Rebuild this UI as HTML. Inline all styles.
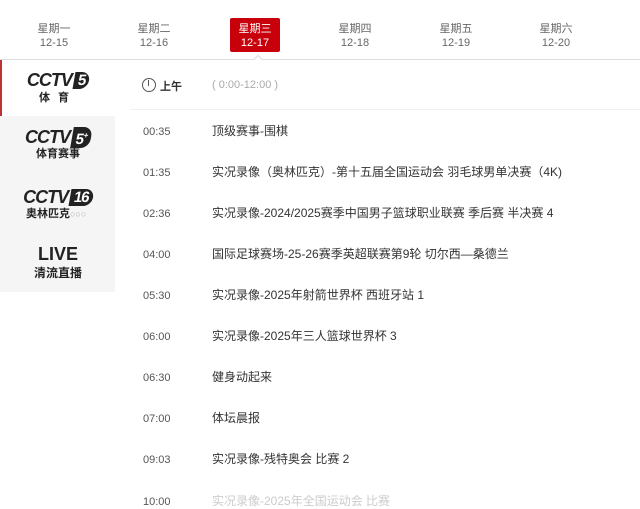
<!DOCTYPE html>
<html><head><meta charset="utf-8"><style>
*{margin:0;padding:0;box-sizing:border-box}
body{width:640px;height:491px;overflow:hidden;background:#fff;font-family:"Liberation Sans","Noto Sans CJK SC",sans-serif;color:#333;position:relative}
.day{position:absolute;top:22px;width:60px;text-align:center;font-size:11px;line-height:14px;color:#666}
.act{background:#c8000b;color:#fff;border-radius:2px;top:18px;height:34px;padding-top:4px;width:50px}
.hline{position:absolute;left:0;top:59px;width:640px;height:1px;background:#ddd}
.side{position:absolute;left:0;top:116px;width:115px;height:176px;background:#f5f5f5}
.logo{position:absolute;left:22px;width:72px;text-align:center}
.cctv{font:italic bold 18px "Liberation Sans",sans-serif;color:#222;letter-spacing:-1px;display:inline-flex;align-items:center;gap:2px}
.badge{background:#222;color:#fff;border-radius:0 9px 9px 0;padding:0 4px;font-size:15px;font-style:normal;line-height:17px;transform:skewX(-10deg)}
.sub{font-size:11px;font-weight:bold;color:#222;line-height:13px}
.row{position:absolute;left:143px;font-size:12px;line-height:14px}
.row .t{display:inline-block;width:69px;color:#555;font-size:11px}
</style></head><body>
<div class="day" style="left:24px">星期一<br>12-15</div>
<div class="day" style="left:124px">星期二<br>12-16</div>
<div class="day act" style="left:230px">星期三<br>12-17</div>
<div class="day" style="left:325px">星期四<br>12-18</div>
<div class="day" style="left:426px">星期五<br>12-19</div>
<div class="day" style="left:526px">星期六<br>12-20</div>
<div class="hline"></div>
<div style="position:absolute;left:255px;top:56px;width:6px;height:6px;background:#fff;border-left:1px solid #ddd;border-top:1px solid #ddd;transform:rotate(45deg)"></div>
<div style="position:absolute;left:0;top:60px;width:2px;height:56px;background:#b33"></div>
<div class="side"></div>
<div class="logo" style="top:70px"><span class="cctv">CCTV<span class="badge">5</span></span><div class="sub" style="letter-spacing:8px;margin-top:1px">体育</div></div>
<div class="logo" style="top:127px"><span class="cctv">CCTV<span class="badge">5<sup style="font-size:8px">+</sup></span></span><div class="sub">体育赛事</div></div>
<div class="logo" style="top:187px"><span class="cctv">CCTV<span class="badge">16</span></span><div class="sub" style="text-align:left;padding-left:4px">奥林匹克<span style="color:#aaa;font-weight:normal;font-size:9px">○○○</span></div></div>
<div class="logo" style="top:244px"><div style="font:bold 18px 'Liberation Sans',sans-serif;color:#222">LIVE</div><div class="sub" style="font-size:12px;margin-top:2px">清流直播</div></div>
<div style="position:absolute;left:142px;top:78px;width:14px;height:14px;border:1px solid #555;border-radius:50%"></div>
<div style="position:absolute;left:148px;top:80px;width:1px;height:6px;background:#555"></div>
<div style="position:absolute;left:160px;top:78px;font-size:11px;font-weight:bold;color:#333">上午</div>
<div style="position:absolute;left:212px;top:79px;font-size:11px;color:#aaa">( 0:00-12:00 )</div>
<div style="position:absolute;left:130px;top:109px;width:510px;height:1px;background:#f0f0f0"></div>
<div class="row" style="top:124px"><span class="t">00:35</span>顶级赛事-围棋</div>
<div class="row" style="top:165px"><span class="t">01:35</span>实况录像（奥林匹克）-第十五届全国运动会 羽毛球男单决赛（4K)</div>
<div class="row" style="top:206px"><span class="t">02:36</span>实况录像-2024/2025赛季中国男子篮球职业联赛 季后赛 半决赛 4</div>
<div class="row" style="top:247px"><span class="t">04:00</span>国际足球赛场-25-26赛季英超联赛第9轮 切尔西—桑德兰</div>
<div class="row" style="top:288px"><span class="t">05:30</span>实况录像-2025年射箭世界杯 西班牙站 1</div>
<div class="row" style="top:329px"><span class="t">06:00</span>实况录像-2025年三人篮球世界杯 3</div>
<div class="row" style="top:370px"><span class="t">06:30</span>健身动起来</div>
<div class="row" style="top:411px"><span class="t">07:00</span>体坛晨报</div>
<div class="row" style="top:452px"><span class="t">09:03</span>实况录像-残特奥会 比赛 2</div>
<div class="row" style="top:494px;color:#ccc"><span class="t">10:00</span>实况录像-2025年全国运动会 比赛</div>
</body></html>
